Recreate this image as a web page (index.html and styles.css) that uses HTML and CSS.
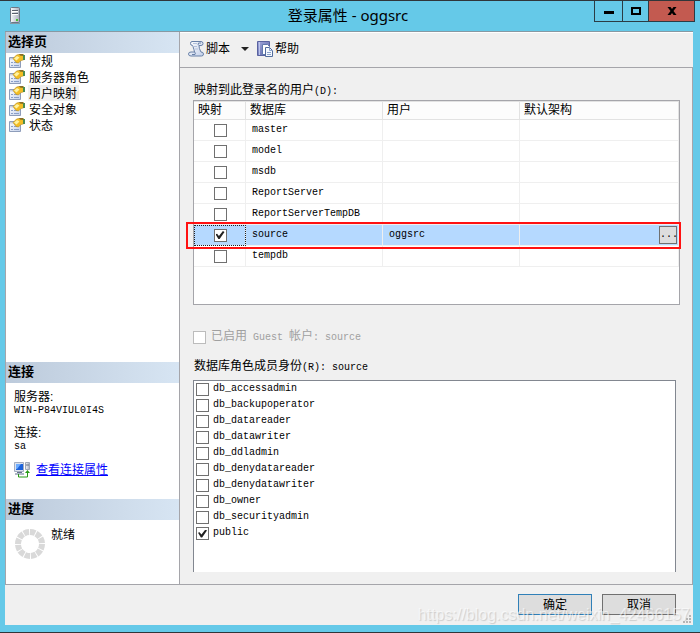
FILE: index.html
```html
<!DOCTYPE html>
<html lang="zh-CN">
<head>
<meta charset="utf-8">
<title>登录属性 - oggsrc</title>
<link rel="stylesheet" href="styles.css">
</head>
<body>
<svg class="defs" aria-hidden="true">
  <defs>
    <linearGradient id="paper" x1="0" y1="0" x2="1" y2="1"><stop offset="0" stop-color="#fff"/><stop offset="1" stop-color="#c3d0ea"/></linearGradient>
    <linearGradient id="metal" x1="0" y1="0" x2="1" y2="0"><stop offset="0" stop-color="#f8f9fb"/><stop offset="1" stop-color="#a9afbd"/></linearGradient>
    <linearGradient id="cover" x1="0" y1="0" x2="1" y2="1"><stop offset="0" stop-color="#a3a9dc"/><stop offset="1" stop-color="#5560a4"/></linearGradient>
    <symbol id="page" viewBox="0 0 16 14">
      <path d="M.5 3.500h11v10H.5z" fill="url(#paper)" stroke="#8e9dba"/>
      <path d="M1 4h10v1.500H1z" fill="#c6cfe2"/>
      <path d="M2 8.500h2M2 11.500h2M5 8.500h4M5 11.500h5" stroke="#8a9fc8"/>
      <path d="M4 4.500 7.500 1l3-.7h4V6l-2.500.5L9.500 9 7 8.500z" fill="#f3bd24" stroke="#a98222" stroke-width=".5"/>
      <path d="M5 4.500 8 2l2.500 1.500L7.500 6.500z" fill="#fff3a0"/>
      <path d="M10 .3h4v1.400l-3-.2z" fill="#6d5a22"/>
      <path d="M14 1h2v5h-2z" fill="#4c8c50"/>
    </symbol>
  </defs>
</svg>
<div class="window">
  <header class="titlebar">
    <svg class="app-icon" viewBox="0 0 10 17"><rect x=".5" y=".5" width="9" height="15" rx="1" fill="url(#metal)" stroke="#6d7684"/><path d="M2 3.500h6M2 6.500h6" stroke="#59606d"/><path d="M2 4.500h6M2 7.500h6" stroke="#fff"/><path d="M6 12h2v2H6z" fill="#45bf32"/><path d="M0 16.500h10" stroke="#8397a5"/></svg>
    <h1 class="title">登录属性 - oggsrc</h1>
    <div class="window-buttons">
      <button class="win-btn" aria-label="最小化"><svg viewBox="0 0 12 10"><path d="M1 5h10v3H1z"/></svg></button>
      <button class="win-btn" aria-label="最大化"><svg viewBox="0 0 12 10"><path d="M1 1h10v8H1zM3 3v4h6V3z" fill-rule="evenodd"/></svg></button>
      <button class="win-btn close" aria-label="关闭"><svg viewBox="0 0 12 10"><path d="M1.500 1h3L6 3l1.500-2h3L7.500 5l3 4h-3L6 7 4.500 9h-3l3-4z"/></svg></button>
    </div>
  </header>
  <div class="client">
    <div class="panes">
      <aside class="side">
        <section class="pages">
          <h2 class="section-title">选择页</h2>
          <nav class="page-list">
            <a href="#general"><svg><use href="#page"/></svg><span>常规</span></a>
            <a href="#roles"><svg><use href="#page"/></svg><span>服务器角色</span></a>
            <a href="#mapping" aria-current="page"><svg><use href="#page"/></svg><span>用户映射</span></a>
            <a href="#securables"><svg><use href="#page"/></svg><span>安全对象</span></a>
            <a href="#status"><svg><use href="#page"/></svg><span>状态</span></a>
          </nav>
        </section>
        <section class="connection">
          <h2 class="section-title">连接</h2>
          <dl class="facts">
            <dt>服务器:</dt><dd class="mono">WIN-P84VIUL0I4S</dd>
            <dt>连接:</dt><dd class="mono">sa</dd>
          </dl>
          <div class="view-link">
            <svg viewBox="0 0 17 16"><path d="M.5.500h9v9h-9z" fill="#dce3ee" stroke="#a3adc0"/><path d="M2 2h7v6H2z" fill="#1d62da"/><path d="M2 2h5L3 7H2z" fill="#6dacff"/><path d="M1 11h9v2H1z" fill="#aeb7c6"/><path d="M3 10h5v1H3z" fill="#66748e"/><path d="M11.500.500h4v7h-4z" fill="url(#metal)" stroke="#a0a8b6"/><path d="M12 3h3" stroke="#687284"/><path d="M4.500 12v3h9V10" fill="none" stroke="#289b16"/><path d="m13.500 8 2.500 3h-5z" fill="#289b16"/></svg>
            <a href="#connection">查看连接属性</a>
          </div>
        </section>
        <section class="progress">
          <h2 class="section-title">进度</h2>
          <div class="progress-state">
            <svg viewBox="0 0 30 30"><circle cx="15" cy="15" r="12" pathLength="120" fill="none" stroke="#d9d9d9" stroke-width="6" stroke-dasharray="8.500 1.500"/></svg>
            <span>就绪</span>
          </div>
        </section>
      </aside>
      <main class="main">
        <div class="toolbar">
          <button class="tool"><svg viewBox="0 0 16 16"><path d="M4 .5h9q2 0 2 2t-2 2h-2q0 3 1.500 5.500l.5 1q2.500 0 2.500 2t-2 2H3q-2.500 0-2.500-2t2.500-2h3.500Q6 8.500 5 5.500L4.500 4.500Q2.500 4.500 2.500 2.500T4 .5z" fill="url(#paper)" stroke="#6880a8"/><path d="M11 4.500q-1.500-1-.5-2.500H13M6.500 11q1.500 1 .5 2.500H4" fill="none" stroke="#6880a8"/><path d="M5 2.500h4M6 5.500h3M7 8h3" stroke="#b4c2dd"/></svg><span>脚本</span></button>
          <button class="drop" aria-label="脚本选项"><svg viewBox="0 0 8 4"><path d="M0 0h8L4 4z" fill="#222"/></svg></button>
          <button class="tool"><svg viewBox="0 0 16 16"><path d="M.5.500h12v14H.5z" fill="url(#cover)" stroke="#5962a0"/><path d="M2.500 1v13" stroke="#bdc5ed"/><path d="M5.500 3.500h5l2 2v8h-7z" fill="#fff" stroke="#6078ad"/><path d="M8.500 6.500h4l3 3v6h-7z" fill="#f5f9ff" stroke="#526c9d"/><path d="M12.500 6.500v3h3M10 11.500h4M10 13.500h4" fill="none" stroke="#8ba3cb"/></svg><span>帮助</span></button>
        </div>
        <div class="content">
          <h3 class="caption" id="map-caption">映射到此登录名的用户<span class="mono">(D):</span></h3>
          <div class="grid-box">
            <table class="grid" aria-labelledby="map-caption">
              <colgroup><col class="c-map"><col class="c-name"><col class="c-name"><col></colgroup>
              <thead><tr><th>映射</th><th>数据库</th><th>用户</th><th>默认架构</th></tr></thead>
              <tbody>
                <tr><td><input type="checkbox" aria-labelledby="d1"></td><td id="d1">master</td><td></td><td></td></tr>
                <tr><td><input type="checkbox" aria-labelledby="d2"></td><td id="d2">model</td><td></td><td></td></tr>
                <tr><td><input type="checkbox" aria-labelledby="d3"></td><td id="d3">msdb</td><td></td><td></td></tr>
                <tr><td><input type="checkbox" aria-labelledby="d4"></td><td id="d4">ReportServer</td><td></td><td></td></tr>
                <tr><td><input type="checkbox" aria-labelledby="d5"></td><td id="d5">ReportServerTempDB</td><td></td><td></td></tr>
                <tr class="selected"><td><input type="checkbox" aria-labelledby="d6" checked></td><td id="d6">source</td><td>oggsrc</td><td><button class="browse" aria-label="浏览">...</button></td></tr>
                <tr><td><input type="checkbox" aria-labelledby="d7"></td><td id="d7">tempdb</td><td></td><td></td></tr>
              </tbody>
            </table>
          </div>
          <label class="guest"><input type="checkbox" disabled><span>已启用<span class="mono"> Guest </span>帐户<span class="mono">: source</span></span></label>
          <h3 class="caption" id="role-caption">数据库角色成员身份<span class="mono">(R): source</span></h3>
          <div class="roles mono" role="group" aria-labelledby="role-caption">
            <label><input type="checkbox"><span>db_accessadmin</span></label>
            <label><input type="checkbox"><span>db_backupoperator</span></label>
            <label><input type="checkbox"><span>db_datareader</span></label>
            <label><input type="checkbox"><span>db_datawriter</span></label>
            <label><input type="checkbox"><span>db_ddladmin</span></label>
            <label><input type="checkbox"><span>db_denydatareader</span></label>
            <label><input type="checkbox"><span>db_denydatawriter</span></label>
            <label><input type="checkbox"><span>db_owner</span></label>
            <label><input type="checkbox"><span>db_securityadmin</span></label>
            <label><input type="checkbox" checked><span>public</span></label>
          </div>
        </div>
      </main>
    </div>
    <footer class="footer">
      <button class="action default">确定</button>
      <button class="action">取消</button>
      <span class="watermark">https://blog.csdn.net/weixin_42466157</span>
      <svg class="grip" viewBox="0 0 8 8"><path d="M6 0h2v2H6zM3 3h2v2H3zM6 3h2v2H6zM0 6h2v2H0zM3 6h2v2H3zM6 6h2v2H6z" fill="#b5b5b5"/></svg>
    </footer>
  </div>
</div>
</body>
</html>
```

FILE: styles.css
```css
* { box-sizing: border-box; }

body {
  margin: 0;
  font-family: "Liberation Sans", "Noto Sans CJK SC", sans-serif;
  font-size: 12px;
  line-height: 16px;
  color: #000;
}

h1, h2, h3, dl, dd { margin: 0; font-weight: normal; }
button { font: inherit; color: inherit; padding: 0; }
svg { display: block; flex: none; }
.defs { position: absolute; width: 0; height: 0; }
.mono { font-family: "Liberation Mono", monospace; font-size: 10px; white-space: pre; }

.window {
  min-height: 100vh;
  display: flex;
  flex-direction: column;
  padding: 0 7px 7px 5px;
  background: #65c9e8;
  border-top: 1px solid #30363a;
  border-bottom: 1px solid #30363a;
}

/* Title bar */
.titlebar {
  display: grid;
  grid-template-columns: 98px 1fr 102px;
  height: 30px;
  margin-right: -2px;
}
.app-icon { width: 10px; height: 17px; margin: 6px 0 0 5px; }
.title {
  font-family: "Noto Sans", "Noto Sans CJK SC", sans-serif;
  font-size: 15px;
  line-height: 28px;
  text-align: center;
}
.window-buttons { display: flex; justify-content: flex-end; }
.win-btn {
  display: grid;
  place-items: center;
  width: 29px;
  height: 21px;
  background: transparent;
  border: 1px solid #2b3c44;
  border-top: 0;
}
.win-btn + .win-btn { margin-left: -1px; width: 27px; }
.win-btn + .win-btn.close { width: 47px; background: #c35a50; }
.win-btn svg { width: 12px; height: 10px; }

.client {
  flex: 1;
  display: flex;
  flex-direction: column;
  background: #f0f0f0;
  border-top: 1px solid #8799a3;
}
.panes {
  flex: 1;
  display: grid;
  grid-template-columns: 175px 1fr;
  border-bottom: 1px solid #a5a5aa;
}

/* Side panel */
.side {
  display: flex;
  flex-direction: column;
  background: #fff;
  border: solid #a5a5aa;
  border-width: 0 1px;
}
.pages { flex: 1; }
.section-title {
  height: 21px;
  padding-left: 2px;
  font-size: 13px;
  font-weight: bold;
  line-height: 19px;
  background: linear-gradient(90deg, #bccadb, #d7e5f3);
}
.page-list { display: flex; flex-direction: column; }
.page-list a {
  display: flex;
  align-items: center;
  gap: 3px;
  height: 16px;
  padding-left: 3px;
  line-height: 18px;
  color: #000;
  text-decoration: none;
}
.page-list svg { width: 16px; height: 14px; }
.page-list span { height: 16px; padding: 0 2px 0 1px; }
.page-list [aria-current] span { background: #f0f0f0; }
.connection { height: 137px; }
.facts { padding: 7px 8px 0; line-height: 15px; }
.facts dd { margin-bottom: 9px; line-height: 12px; }
.view-link { display: flex; gap: 5px; padding-left: 8px; }
.view-link svg { width: 17px; height: 16px; }
.view-link a { color: #00f; }
.progress { height: 85px; }
.progress-state { display: flex; gap: 6px; padding: 7px 9px; }
.progress-state svg { width: 30px; height: 30px; margin-top: 2px; }

/* Main panel */
.main { display: flex; flex-direction: column; }
.toolbar {
  display: flex;
  align-items: center;
  height: 36px;
  padding: 0 8px 3px;
  border-top: 1px solid #fff;
  border-bottom: 1px solid #a5a5aa;
}
.tool, .drop { display: flex; align-items: center; gap: 2px; border: 0; background: none; }
.tool svg { width: 16px; height: 16px; }
.drop { padding: 0 8px 0 11px; }
.drop svg { width: 8px; height: 4px; }

.content {
  flex: 1;
  display: flex;
  flex-direction: column;
  padding: 14px 12px 12px 13px;
  border-right: 1px solid #a5a5aa;
}
.caption { height: 16px; font-size: 12px; line-height: 16px; padding-left: 1px; }
.grid-box {
  min-height: 205px;
  margin-top: 2px;
  background: #fff;
  border: 1px solid #a5a5aa;
}
.grid { width: 100%; table-layout: fixed; border-collapse: separate; border-spacing: 0; }
.c-map { width: 52px; }
.c-name { width: 137px; }
.grid th {
  height: 19px;
  padding: 0 4px;
  font-weight: normal;
  line-height: 17px;
  text-align: left;
  background: #fcfcfc;
  border: solid #e2e2e2;
  border-width: 1px 1px 1px 0;
}
.grid td {
  height: 21px;
  padding: 0 6px;
  font-family: "Liberation Mono", monospace;
  font-size: 10px;
  line-height: 16px;
  border: solid #efefef;
  border-width: 0 1px 1px 0;
}
.grid td:first-child { padding: 0 0 0 1px; }
.grid td > input { display: block; margin: 0 auto; }
.grid .selected { position: relative; }
.selected td { background: #b5d9ff; }
.selected td:first-child { outline: 1px dotted #222; outline-offset: -1px; }
.grid .selected td:last-child { padding: 0 1px; }
.selected td:last-child::after {
  content: "";
  position: absolute;
  inset: -3px -2px -3px -8px;
  border: 2px solid #f11;
  pointer-events: none;
}
.browse {
  display: block;
  width: 18px;
  height: 18px;
  margin-left: auto;
  line-height: 16px;
  background: #ddd;
  border: 1px solid #707070;
}

[type="checkbox"] {
  appearance: none;
  flex: none;
  width: 13px;
  height: 13px;
  margin: 0;
  background: #fff;
  border: 1px solid #707070;
}
.roles :checked, .grid td > :checked { display: grid; place-items: center; }
:checked::before {
  content: "";
  width: 9px;
  height: 8px;
  background: #222;
  clip-path: polygon(0 42%, 18% 34%, 38% 62%, 82% 0, 100% 14%, 46% 100%, 32% 100%);
}
[type="checkbox"]:disabled { border-color: #bcbcbc; }

.guest { display: flex; align-items: center; gap: 5px; height: 16px; margin: 24px 0 13px; color: #a0a0a0; }
.roles {
  flex: 1;
  display: flex;
  flex-direction: column;
  margin: 6px 4px 0 0;
  padding: 0 2px;
  background: #fff;
  border: 1px solid #828790;
  border-bottom: 0;
}
.roles label { display: flex; gap: 4px; height: 16px; line-height: 15px; }
.roles input { margin-top: 2px; }

/* Footer */
.footer {
  position: relative;
  display: flex;
  justify-content: flex-end;
  gap: 10px;
  height: 40px;
  padding: 9px 17px 0 0;
}
.action { width: 74px; height: 21px; line-height: 21px; background: #ddd; border: 1px solid #707070; }
.action.default { border-color: #3080b8; }
.watermark {
  position: absolute;
  right: 3px;
  bottom: 0;
  font-size: 16px;
  line-height: 20px;
  color: rgba(255, 255, 255, .6);
  text-shadow: 1px 1px 1px rgba(0, 0, 0, .15);
  pointer-events: none;
}
.grip { position: absolute; right: 2px; bottom: 2px; width: 8px; height: 8px; }
```
